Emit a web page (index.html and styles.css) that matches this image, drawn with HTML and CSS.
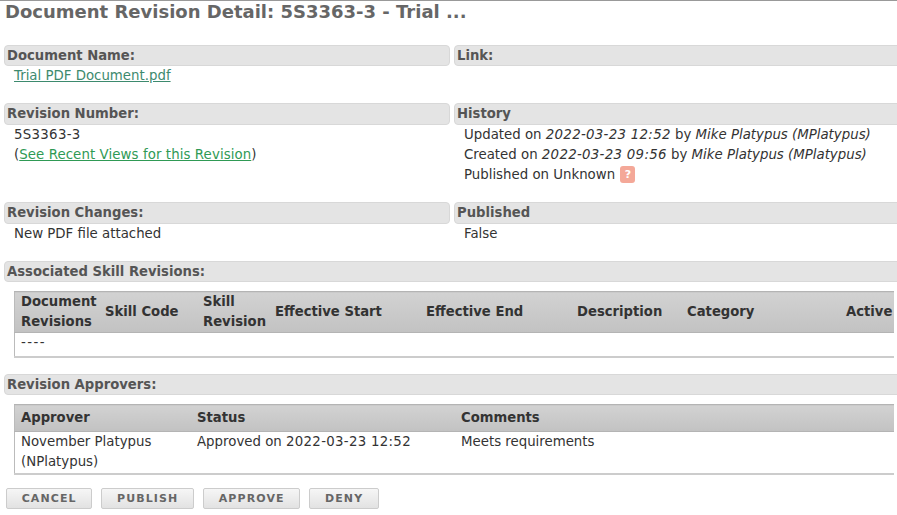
FILE: index.html
```html
<!DOCTYPE HTML>
<html>
<head>
<meta name="viewport" content="width=device-width, initial-scale=1">
<link rel="stylesheet" href="styles.css">
</head>
<body>

<h1 class="pageTitle">Document Revision Detail: 5S3363-3 - Trial ...</h1>

<div class="twoCol firstRow">
	<div>
		<h2 class="sectionHead">Document Name:</h2>
		<div class="sectionBody"><a href="#">Trial PDF Document.pdf</a></div>
	</div>
	<div>
		<h2 class="sectionHead">Link:</h2>
		<div class="sectionBody"></div>
	</div>
</div>

<div class="twoCol">
	<div>
		<h2 class="sectionHead">Revision Number:</h2>
		<div class="sectionBody">
			<p class="digits">5S3363-3</p>
			<p>(<a href="#" class="brightLink">See Recent Views for this Revision</a>)</p>
		</div>
	</div>
	<div>
		<h2 class="sectionHead">History</h2>
		<div class="sectionBody indented">
			<p>Updated on <em class="date">2022-03-23 12:52</em> by <em>Mike Platypus (MPlatypus)</em></p>
			<p>Created on <em class="date">2022-03-23 09:56</em> by <em>Mike Platypus (MPlatypus)</em></p>
			<p>Published on Unknown <span class="helpBadge">?</span></p>
		</div>
	</div>
</div>

<div class="twoCol">
	<div>
		<h2 class="sectionHead">Revision Changes:</h2>
		<div class="sectionBody">New PDF file attached</div>
	</div>
	<div>
		<h2 class="sectionHead">Published</h2>
		<div class="sectionBody indented">False</div>
	</div>
</div>

<h2 class="sectionHead wide">Associated Skill Revisions:</h2>
<table class="dataTable skillTable">
	<thead>
		<tr>
			<th class="colDoc">Document Revisions</th>
			<th class="colCode">Skill Code</th>
			<th class="colRev">Skill Revision</th>
			<th class="colStart">Effective Start</th>
			<th class="colEnd">Effective End</th>
			<th class="colDesc">Description</th>
			<th class="colCat">Category</th>
			<th class="colActive">Active</th>
		</tr>
	</thead>
	<tbody>
		<tr><td colspan="8" class="dashes">----</td></tr>
	</tbody>
</table>

<h2 class="sectionHead wide">Revision Approvers:</h2>
<table class="dataTable approverTable">
	<thead>
		<tr>
			<th class="colApprover">Approver</th>
			<th class="colStatus">Status</th>
			<th>Comments</th>
		</tr>
	</thead>
	<tbody>
		<tr>
			<td>November Platypus (NPlatypus)</td>
			<td>Approved on <span class="digits">2022-03-23 12:52</span></td>
			<td>Meets requirements</td>
		</tr>
	</tbody>
</table>

<div class="buttonBox">
	<button class="actionButton">Cancel</button>
	<button class="actionButton">Publish</button>
	<button class="actionButton">Approve</button>
	<button class="actionButton">Deny</button>
</div>

</body>
</html>
```
FILE: styles.css
```css
html, body {
	margin: 0px;
	height: 515px;
	overflow: hidden;
}

body {
	width: 897px;
	background-color: #fff;
	border-top: 1px solid #999;
	box-sizing: border-box;
	font-family: "DejaVu Sans", Verdana, sans-serif;
	font-size: 13.33px;
	line-height: 20px;
	color: #333;
}

a {
	color: #3d8a6e;
}
a.brightLink {
	color: #2f9a55;
	letter-spacing: 0.09px;
}

p {
	margin: 0px;
}

.pageTitle {
	margin: 0px 0px 0px 5px;
	height: 44px;
	font-size: 18px;
	line-height: 21px;
	font-weight: bold;
	color: #666;
}

.twoCol {
	display: grid;
	grid-template-columns: 446px 460px;
	column-gap: 4px;
	margin-left: 4px;
	margin-bottom: 17px;
}

.sectionHead {
	margin: 0px;
	height: 22px;
	box-sizing: border-box;
	padding-left: 2px;
	background-color: #e4e4e4;
	border: 1px solid #d8d8d8;
	border-radius: 4px;
	font-size: 13.2px;
	line-height: 19px;
	font-weight: bold;
	color: #555;
}
.firstRow .sectionHead {
	height: 21px;
}
.sectionHead.wide {
	width: 906px;
	margin-left: 4px;
	height: 21px;
}

.sectionBody {
	padding: 0px 0px 0px 10px;
	min-height: 20px;
}
.sectionBody.indented {
	padding-left: 10px;
}

em {
	font-style: italic;
}
em.date {
	letter-spacing: 0.3px;
}

.digits {
	letter-spacing: 0.3px;
}
.dataTable td.dashes {
	letter-spacing: 1.4px;
}

.helpBadge {
	display: inline-block;
	width: 15px;
	height: 17px;
	margin-left: 1px;
	line-height: 17px;
	border-radius: 3px;
	background-color: #f4a898;
	color: #fff;
	font-size: 11px;
	font-weight: bold;
	text-align: center;
	vertical-align: 1px;
}

.dataTable {
	width: 880px;
	margin-left: 14px;
	border-collapse: collapse;
	table-layout: fixed;
	border-bottom: 2px solid #ccc;
	border-left: 1px solid #bbb;
}
.dataTable th {
	padding: 0px 0px 0px 6px;
	text-align: left;
	font-size: 13.2px;
	font-weight: bold;
	color: #333;
	background: linear-gradient(#d2d2d2, #c2c2c2);
	border-top: 1px solid #b4b4b4;
	border-bottom: 1px solid #b4b4b4;
}
.dataTable td {
	padding: 0px 0px 0px 6px;
	vertical-align: top;
}

.skillTable {
	margin-top: 9px;
	margin-bottom: 16px;
}
.skillTable td {
	height: 23px;
}
.colDoc { width: 78px; }
.colCode { width: 92px; }
.colRev { width: 66px; }
.colStart { width: 145px; }
.colEnd { width: 145px; }
.colDesc { width: 104px; }
.colCat { width: 153px; }

.approverTable {
	margin-top: 9px;
}
.approverTable th {
	height: 26px;
}
.approverTable td {
	padding-bottom: 1px;
}
.colApprover { width: 170px; }
.colStatus { width: 258px; }

.buttonBox {
	display: flex;
	gap: 9px;
	margin: 13px 0px 0px 6px;
}
.actionButton {
	height: 21px;
	padding: 0px 14.7px;
	background: linear-gradient(#f6f6f6, #e2e2e2);
	border: 1px solid #ccc;
	border-radius: 2px;
	font-family: "DejaVu Sans", Verdana, sans-serif;
	font-size: 11px;
	font-weight: bold;
	letter-spacing: 1.1px;
	text-transform: uppercase;
	color: #666;
}
```
